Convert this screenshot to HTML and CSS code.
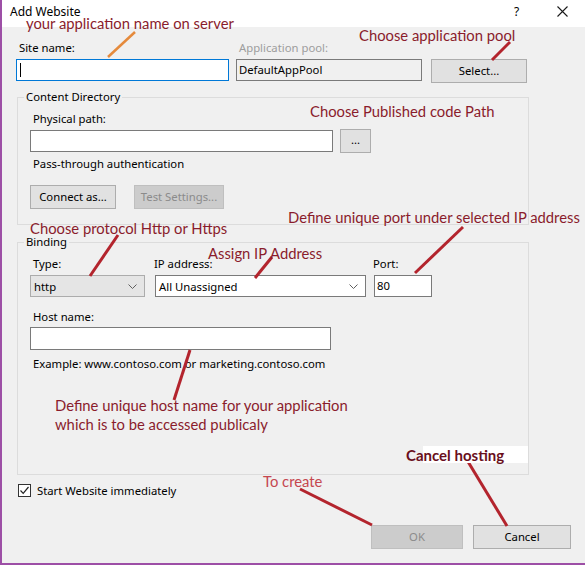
FILE: index.html
```html
<!DOCTYPE html>
<html>
<head>
<meta charset="utf-8">
<link rel="stylesheet" href="styles.css">
</head>
<body>
<div class="window">
  <div class="titlebar">
    <span class="title">Add Website</span>
    <span class="help">?</span>
    <svg class="close" width="11" height="11" viewBox="0 0 11 11"><path d="M0.5 0.5 L10.5 10.5 M10.5 0.5 L0.5 10.5" stroke="#1a1a1a" stroke-width="1.1" fill="none"/></svg>
  </div>
  <div class="body">
    <div class="row1">
      <div class="field site">
        <div class="lbl">Site name:</div>
        <div class="input focus"><span class="caret"></span></div>
      </div>
      <div class="field pool">
        <div class="lbl disabled">Application pool:</div>
        <div class="input readonly">DefaultAppPool</div>
      </div>
      <div class="btn select">Select...</div>
    </div>

    <fieldset class="group content-dir">
      <legend>Content Directory</legend>
      <div class="lbl">Physical path:</div>
      <div class="path-row">
        <div class="input path"></div>
        <div class="btn browse">...</div>
      </div>
      <div class="lbl pass">Pass-through authentication</div>
      <div class="btn-row">
        <div class="btn connect">Connect as...</div>
        <div class="btn disabled-btn test">Test Settings...</div>
      </div>
    </fieldset>

    <fieldset class="group binding">
      <legend>Binding</legend>
      <div class="bind-row">
        <div class="field type">
          <div class="lbl">Type:</div>
          <div class="combo gray"><span>http</span><svg class="chev" width="9" height="5" viewBox="0 0 9 5"><path d="M0.5 0.5 L4.5 4.5 L8.5 0.5" stroke="#606060" fill="none"/></svg></div>
        </div>
        <div class="field ip">
          <div class="lbl">IP address:</div>
          <div class="combo white"><span>All Unassigned</span><svg class="chev" width="9" height="5" viewBox="0 0 9 5"><path d="M0.5 0.5 L4.5 4.5 L8.5 0.5" stroke="#606060" fill="none"/></svg></div>
        </div>
        <div class="field port">
          <div class="lbl">Port:</div>
          <div class="input port-in">80</div>
        </div>
      </div>
      <div class="lbl host-lbl">Host name:</div>
      <div class="input host"></div>
      <div class="lbl example">Example: www.contoso.com or marketing.contoso.com</div>
    </fieldset>

    <div class="check-row">
      <span class="checkbox"><svg width="11" height="11" viewBox="0 0 11 11"><path d="M1.5 5.5 L4.2 8.3 L9.5 2" stroke="#222" stroke-width="1.2" fill="none"/></svg></span>
      <span>Start Website immediately</span>
    </div>

    <div class="footer">
      <div class="btn disabled-btn ok">OK</div>
      <div class="btn cancel">Cancel</div>
    </div>
  </div>

  <svg class="arrows" width="585" height="565" viewBox="0 0 585 565">
    <line x1="108" y1="57" x2="135" y2="32" stroke="#e58a3c" stroke-width="2.5"/>
    <line x1="492" y1="60" x2="510" y2="42" stroke="#b3242d" stroke-width="3"/>
    <line x1="90" y1="276" x2="118" y2="235" stroke="#b3242d" stroke-width="3"/>
    <line x1="255" y1="278" x2="272" y2="257" stroke="#b3242d" stroke-width="3"/>
    <line x1="415" y1="273" x2="463" y2="227" stroke="#b3242d" stroke-width="3"/>
    <line x1="190" y1="350" x2="174" y2="400" stroke="#b3242d" stroke-width="3"/>
    <line x1="300" y1="489" x2="372" y2="525" stroke="#b3242d" stroke-width="3"/>
    <line x1="467" y1="460" x2="507" y2="526" stroke="#b3242d" stroke-width="3"/>
  </svg>

  <div class="patch"></div>
  <div class="note n-site">your application name on server</div>
  <div class="note n-pool">Choose application pool</div>
  <div class="note n-path">Choose Published code Path</div>
  <div class="note n-port">Define unique port under selected IP address</div>
  <div class="note n-proto">Choose protocol Http or Https</div>
  <div class="note n-ip">Assign IP Address</div>
  <div class="note n-host">Define unique host name for your application<br>which is to be accessed publicaly</div>
  <div class="note n-create">To create</div>
  <div class="note n-cancel">Cancel hosting</div>
</div>
</body>
</html>
```

FILE: styles.css
```css
* { box-sizing: border-box; }
html, body { margin: 0; padding: 0; }
body {
  width: 585px;
  height: 565px;
  overflow: hidden;
  background: #f0f0f0;
  font-family: "Noto Sans", "Open Sans", sans-serif;
  font-size: 11.3px;
  color: #000;
}
.window {
  position: relative;
  width: 585px;
  height: 565px;
  background: #f0f0f0;
  border-left: 2px solid #9d4fa6;
  border-bottom: 2px solid #9d4fa6;
}
.titlebar {
  height: 27px;
  background: #fff;
  display: flex;
  align-items: center;
  padding-left: 8px;
  position: relative;
}
.title { font-size: 12px; line-height: 14px; color: #000; margin-top: -3px; }
.help { position: absolute; left: 512px; top: 3px; font-size: 12px; }
.close { position: absolute; left: 555px; top: 6px; }

.body { padding: 13px 14px 0 14px; }

.lbl { line-height: 16px; height: 16px; padding-left: 3px; white-space: nowrap; }
.lbl.disabled { color: #9d9d9d; }

.row1 { display: flex; align-items: flex-start; }
.field .lbl { margin-bottom: 3px; }
.site { width: 213px; }
.pool { width: 186px; margin-left: 7px; }
.input {
  height: 22px;
  background: #fff;
  border: 1px solid #7a7a7a;
  line-height: 20px;
  padding-left: 2px;
  white-space: nowrap;
}
.input.focus { border-color: #0078d7; position: relative; }
.caret { position: absolute; left: 3px; top: 3px; width: 1px; height: 14px; background: #000; }
.input.readonly { background: #f0f0f0; }

.btn {
  height: 24px;
  background: #e1e1e1;
  border: 1px solid #adadad;
  text-align: center;
  line-height: 22px;
  white-space: nowrap;
}
.select { width: 96px; margin-left: 9px; margin-top: 19px; }
.disabled-btn { background: #cccccc; border-color: #bfbfbf; color: #8b8b8b; }

.group {
  margin: 0 0 0 1px;
  width: 512px;
  border: 1px solid #dcdcdc;
  padding: 6px 12px 0 12px;
}
.group legend {
  padding: 0 2px;
  margin-left: -6px;
  line-height: 16px;
  font-size: 11.3px;
}
.content-dir { margin-top: 6px; padding-bottom: 15px; }
.content-dir .lbl { margin-bottom: 2px; }
.path-row { display: flex; align-items: center; height: 24px; }
.path { width: 303px; }
.browse { width: 31px; margin-left: 7px; line-height: 20px; }
.pass { margin-top: 3px; }
.btn-row { display: flex; margin-top: 13px; }
.connect { width: 86px; }
.test { width: 90px; margin-left: 18px; }

.binding { margin-top: 9px; padding-bottom: 102px; }
.bind-row { display: flex; }
.type { width: 115px; }
.ip { width: 211px; margin-left: 10px; }
.port { width: 58px; margin-left: 8px; }
.ip .lbl, .port .lbl { padding-left: 0; margin-left: -1px; }
.combo {
  height: 22px;
  border: 1px solid #acacac;
  display: flex;
  align-items: center;
  justify-content: space-between;
  padding: 0 7px 0 3px;
}
.combo.gray { background: #e5e5e5; }
.combo.white { background: #fff; border-color: #7a7a7a; }
.host-lbl { margin-top: 12px; }
.host { width: 301px; height: 23px; margin-top: 2px; }
.example { margin-top: 6px; }

.check-row { display: flex; align-items: center; margin-top: 8px; margin-left: 2px; height: 14px; }
.checkbox {
  width: 13px; height: 13px;
  border: 1px solid #333;
  background: #fff;
  display: flex; align-items: center; justify-content: center;
  margin-right: 6px;
}

.footer { display: flex; justify-content: flex-end; margin-top: 28px; padding-right: 0; }
.ok { width: 92px; }
.cancel { width: 98px; margin-left: 10px; }

.arrows { position: absolute; left: -2px; top: 0; pointer-events: none; }

.note {
  position: absolute;
  font-family: "Lato", "Open Sans", sans-serif;
  font-size: 14.8px;
  line-height: 14px;
  color: #8a1c2c;
  white-space: nowrap;
}
.n-site { left: 24px; top: 16px; }
.n-pool { left: 357px; top: 27.5px; }
.n-path { left: 308px; top: 103.5px; }
.n-port { left: 286px; top: 209.5px; }
.n-proto { left: 28px; top: 221px; }
.n-ip { left: 206px; top: 245.5px; }
.n-host { left: 53px; top: 396px; line-height: 19px; }
.n-create { left: 261px; top: 473.5px; color: #c5474f; }
.n-cancel { left: 404px; top: 447.5px; font-weight: bold; color: #6a0f1c; font-size: 15px; }
.patch { position: absolute; left: 421px; top: 446px; width: 105px; height: 17px; background: #fff; }
```
